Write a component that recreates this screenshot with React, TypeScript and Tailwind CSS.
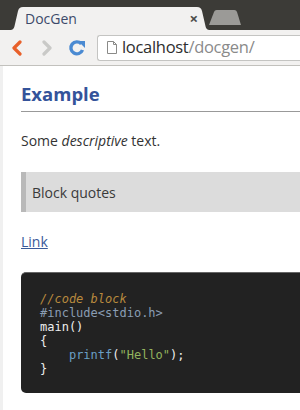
import React from "react";

export default function App() {
  return (
    <div className="w-[300px] h-[410px] overflow-hidden bg-white flex flex-col" style={{ fontFamily: '"Open Sans", sans-serif' }}>
      {/* title bar */}
      <div className="h-[30px] bg-[#3c3b37] flex items-end pl-[9px] shrink-0">
        <div className="relative w-[202px] h-[23px] flex items-center pl-[16px] pr-[13px]">
          <svg className="absolute inset-0" width="202" height="23" viewBox="0 0 202 23">
            <path d="M0 23 C5 23 5 21 6 17 L9 4 C10 1 11 0 14 0 L188 0 C191 0 192 1 193 4 L196 17 C197 21 197 23 202 23 Z" fill="#f2f1f0" />
          </svg>
          <span className="relative text-[14px] text-[#3c4a6a] leading-none mt-[1px]" style={{ fontFamily: '"Open Sans", sans-serif' }}>DocGen</span>
          <span className="relative ml-auto text-[15px] text-[#4c4c4c] leading-none font-bold">×</span>
        </div>
        <svg className="mb-[5px] -ml-[2px]" width="32" height="15" viewBox="0 0 32 15">
          <path d="M0 15 L5 2 C6 0 7 0 9 0 L24 0 C26 0 27 0 28 2 L32 15 Z" fill="#9b9a97" />
        </svg>
      </div>
      {/* toolbar */}
      <div className="h-[36px] bg-[#f2f1f0] border-b border-[#c2c1bd] flex items-center shrink-0">
        <svg className="ml-[11px]" width="12" height="16" viewBox="0 0 12 16">
          <path d="M9 2 L3 8 L9 14" fill="none" stroke="#e8602a" strokeWidth="3.2" strokeLinecap="round" strokeLinejoin="round" />
        </svg>
        <svg className="ml-[18px]" width="12" height="16" viewBox="0 0 12 16">
          <path d="M3 2 L9 8 L3 14" fill="none" stroke="#c9c9c7" strokeWidth="3.2" strokeLinecap="round" strokeLinejoin="round" />
        </svg>
        <svg className="ml-[15px]" width="18" height="18" viewBox="0 0 18 18">
          <path d="M14.5 11 A6 6 0 1 1 13.3 4.8" fill="none" stroke="#4a8ad2" strokeWidth="3.4" />
          <path d="M10 2 L17 2 L17 9 Z" fill="#4a8ad2" />
        </svg>
        <div className="ml-[11px] flex-1 h-[26px] bg-white border border-[#c4c4c2] rounded-l-[3px] border-r-0 flex items-center pl-[8px]">
          <svg width="12" height="15" viewBox="0 0 12 15">
            <path d="M1.5 1.5 L7.5 1.5 L10.5 4.5 L10.5 13.5 L1.5 13.5 Z M7.5 1.5 L7.5 4.5 L10.5 4.5" fill="#fff" stroke="#8a8a88" strokeWidth="1" />
          </svg>
          <span className="ml-[4px] text-[16.5px] leading-none tracking-[-0.3px]" style={{ fontFamily: '"Open Sans", sans-serif' }}>
            <span className="text-[#2e2e2e]">localhost</span>
            <span className="text-[#8a8a8a]">/docgen/</span>
          </span>
        </div>
      </div>
      {/* page */}
      <div className="flex-1 flex">
        <div className="w-[3px] bg-[#f0f0f0] shrink-0" />
        <div className="pl-[18px] pt-[16px] w-[320px] shrink-0 text-[#333] text-[14px]">
          <h1 className="text-[18.5px] font-bold text-[#34539a] leading-[24px] pb-[5px] border-b border-[#999]">Example</h1>
          <p className="mt-[19px] leading-[20px]">
            Some <em>descriptive</em> text.
          </p>
          <div className="mt-[21px] h-[40px] bg-[#dcdcdc] border-l-[5px] border-[#b9b9b9] flex items-center pl-[6px] text-[14px] text-[#3a3a3a]">
            Block quotes
          </div>
          <a className="block mt-[20px] text-[#3a5a9a] underline leading-[20px] w-fit" href="#">Link</a>
          <div className="mt-[20px] h-[121px] bg-[#222222] rounded-[5px] border-t border-[#666] pt-[19px] pl-[19px] text-[12px] leading-[14px] whitespace-pre" style={{ fontFamily: '"DejaVu Sans Mono", monospace' }}>
            <div className="text-[#b98a3e] italic">//code block</div>
            <div className="text-[#8a9db3]">#include&lt;stdio.h&gt;</div>
            <div className="text-[#eeeeee]">main()</div>
            <div className="text-[#eeeeee]">{"{"}</div>
            <div className="text-[#eeeeee]">
              {"    "}<span className="text-[#6a9fc5]">printf</span>(<span className="text-[#93b35e]">"Hello"</span>);
            </div>
            <div className="text-[#eeeeee]">{"}"}</div>
          </div>
        </div>
      </div>
    </div>
  );
}
